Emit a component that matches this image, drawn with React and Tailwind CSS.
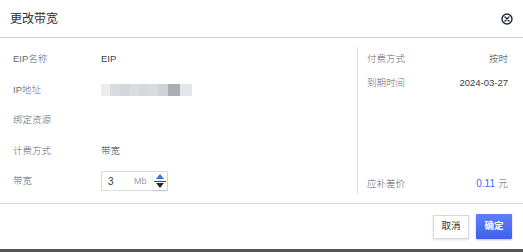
import React from "react";

const font = { fontFamily: "'Liberation Sans','Noto Sans CJK SC',sans-serif" };

function Row({ label, children }) {
  return (
    <div className="flex items-center h-[30.5px]">
      <div className="w-[88px] text-[#666a70]">{label}</div>
      <div className="text-[#3a3e44]">{children}</div>
    </div>
  );
}

export default function App() {
  const blur = [
    ["w-[9px]", "bg-[#ebecee]"],
    ["w-[10px]", "bg-[#d9dbdf]"],
    ["w-[9px]", "bg-[#d4d6db]"],
    ["w-[10px]", "bg-[#dadce0]"],
    ["w-[9px]", "bg-[#d6d8dc]"],
    ["w-[10px]", "bg-[#d9dbdf]"],
    ["w-[10px]", "bg-[#d0d2d7]"],
    ["w-[12px]", "bg-[#a9adb5]"],
    ["w-[12px]", "bg-[#e5e6e9]"],
  ];
  return (
    <div className="w-[523px] h-[252px] bg-white flex flex-col text-[9.5px] font-light overflow-hidden" style={font}>
      <div className="h-[38px] shrink-0 flex items-center justify-between pl-[10px] pr-[10px] border-b border-[#cfd4db]">
        <span className="text-[12px] text-[#2b2f36] font-normal">更改带宽</span>
        <svg width="12" height="12" viewBox="0 0 12 12" className="mt-[1px]">
          <circle cx="6" cy="6" r="5" fill="none" stroke="#1f2a3a" strokeWidth="1.4" />
          <path d="M4 4 L8 8 M8 4 L4 8" stroke="#1f2a3a" strokeWidth="1.4" strokeLinecap="round" />
        </svg>
      </div>

      <div className="flex-1 flex">
        <div className="w-[357px] pl-[13px] pt-[6px]">
          <Row label="EIP名称">EIP</Row>
          <Row label="IP地址">
            <div className="flex h-[12px] mt-[1px]">
              {blur.map(([w, c], i) => (
                <div key={i} className={`${w} ${c} h-full`} />
              ))}
            </div>
          </Row>
          <Row label="绑定资源"></Row>
          <Row label="计费方式">带宽</Row>
          <Row label="带宽">
            <div className="flex items-stretch h-[20px] w-[67px] border border-[#d8dce2] bg-white">
              <span className="pl-[6px] w-[32px] flex items-center text-[#33373d] text-[10px]">3</span>
              <span className="flex items-center text-[#9ca0a6] text-[9px]">Mb</span>
              <div className="ml-auto w-[14px] flex flex-col items-center justify-center shadow-[0_1px_2px_rgba(0,0,0,0.15)] bg-white">
                <svg width="8" height="5" viewBox="0 0 8 5"><path d="M4 0 L8 5 L0 5 Z" fill="#3b6cf6" /></svg>
                <div className="w-[12px] h-px bg-[#444] my-[1.5px]" />
                <svg width="8" height="5" viewBox="0 0 8 5"><path d="M0 0 L8 0 L4 5 Z" fill="#1f2a3a" /></svg>
              </div>
            </div>
          </Row>
        </div>

        <div className="flex-1 my-[9px] border-l border-[#dcdfe4] pl-[9px] pr-[15px] flex flex-col">
          <div className="flex items-center justify-between h-[24px]">
            <span className="text-[#666a70]">付费方式</span>
            <span className="text-[#3a3e44]">按时</span>
          </div>
          <div className="flex items-center justify-between h-[24px]">
            <span className="text-[#666a70]">到期时间</span>
            <span className="text-[#3a3e44]">2024-03-27</span>
          </div>
          <div className="mt-auto flex items-center justify-between h-[22px] mb-[-1px]">
            <span className="text-[#555a60]">应补差价</span>
            <span>
              <span className="text-[#3b6cf6] text-[10px]">0.11</span>
              <span className="text-[#666a70] ml-[3px] text-[10px]">元</span>
            </span>
          </div>
        </div>
      </div>

      <div className="h-[46px] shrink-0 border-t border-[#d3d7dd] flex items-center justify-end gap-[7px] pr-[11px]">
        <button className="w-[36px] h-[24px] bg-white border border-[#d5d9df] shadow-[0_1px_2px_rgba(0,0,0,0.12)] text-[#2b2f36] text-[9.5px] font-normal">取消</button>
        <button className="w-[36px] h-[25px] bg-gradient-to-b from-[#5e80f8] to-[#3f60ee] shadow-[0_1px_2px_rgba(40,70,200,0.35)] text-white text-[9.5px] font-bold rounded-[1px]">确定</button>
      </div>
      <div className="h-[3px] shrink-0 bg-[#555]" />
    </div>
  );
}
